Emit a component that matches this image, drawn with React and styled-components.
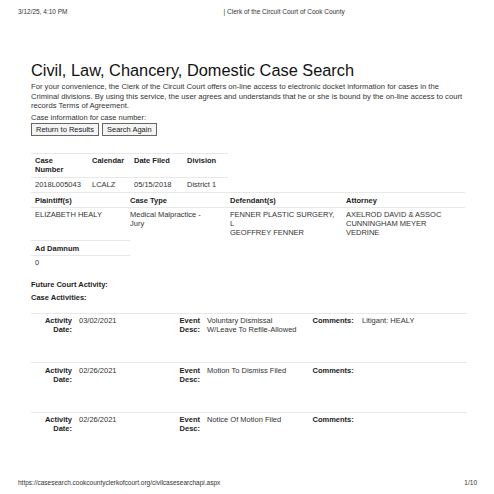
import styled, { createGlobalStyle } from "styled-components";

const GlobalStyle = createGlobalStyle`
  html, body {
    margin: 0;
    padding: 0;
    background: #fff;
  }
  body {
    font-family: "Liberation Sans", Arial, Helvetica, sans-serif;
    color: #333;
  }
`;

const Page = styled.div`
  width: 494px;
  height: 494px;
  display: flex;
  flex-direction: column;
  box-sizing: border-box;
  overflow: hidden;
`;

const PrintBar = styled.div`
  display: flex;
  align-items: center;
  justify-content: space-between;
  padding: ${(p) => (p.$bottom ? "0 17px 7px 18px" : "8px 18px 0")};
  font-size: 6.5px;
  color: #333;
  line-height: 8px;
`;

const PrintTitle = styled.span`
  flex: 1;
  padding-left: 156px;
`;

const Main = styled.main`
  flex: 1;
  padding: 0 27px 0 31px;
`;

const Title = styled.h1`
  margin: 45px 0 0;
  font-size: 16.35px;
  font-weight: normal;
  line-height: 18px;
  color: #111;
`;

const Text = styled.p`
  margin: ${(p) => p.$margin || "3px 0 0"};
  font-size: ${(p) => p.$size || 7.5}px;
  line-height: 9.7px;
  color: #333;
`;

const Buttons = styled.div`
  display: flex;
  gap: 3px;
  margin-top: 0;
`;

const Button = styled.button`
  font-family: inherit;
  font-size: 7.5px;
  line-height: 9px;
  color: #222;
  background: #f4f4f4;
  border: 1px solid #666;
  border-radius: 0;
  padding: 1px 4px;
  margin: 0;
`;

const Table = styled.table`
  border-collapse: collapse;
  table-layout: fixed;
  width: ${(p) => p.$width}px;
  margin-top: ${(p) => p.$top || 0}px;
  font-size: 7.5px;
  line-height: 9px;
`;

const Th = styled.th`
  text-align: left;
  font-weight: bold;
  color: #222;
  padding: 2.5px 4px;
  border-top: 1px solid #e8e8e8;
  border-bottom: 1px solid #e8e8e8;
  vertical-align: top;
`;

const Td = styled.td`
  padding: 3px 4px;
  vertical-align: top;
  color: #333;
  line-height: 8.6px;
`;

const SectionLabel = styled.div`
  font-size: 7.5px;
  line-height: 9px;
  font-weight: bold;
  color: #222;
  margin-top: ${(p) => p.$top}px;
`;

const Activities = styled.div`
  margin-top: 11px;
`;

const ActivityRow = styled.div`
  display: grid;
  grid-template-columns: 44.5px 100px 28px 109px 46px 1fr;
  height: 49.5px;
  box-sizing: border-box;
  border-top: 1px solid #e8e8e8;
  padding-top: 3.5px;
  font-size: 7.5px;
  line-height: 8.8px;
`;

const Label = styled.div`
  text-align: ${(p) => (p.$left ? "left" : "right")};
  font-weight: bold;
  color: #222;
  padding: 0 3.5px 0 0;
  white-space: nowrap;
`;

const Value = styled.div`
  color: #333;
  padding: 0 3.5px;
`;

const activities = [
  {
    date: "03/02/2021",
    desc: ["Voluntary Dismissal", "W/Leave To Refile-Allowed"],
    comments: "Litigant: HEALY",
  },
  { date: "02/26/2021", desc: ["Motion To Dismiss Filed"], comments: "" },
  { date: "02/26/2021", desc: ["Notice Of Motion Filed"], comments: "" },
];

export default function App() {
  return (
    <>
      <GlobalStyle />
      <Page>
        <PrintBar>
          <span>3/12/25, 4:10 PM</span>
          <PrintTitle>| Clerk of the Circuit Court of Cook County</PrintTitle>
        </PrintBar>

        <Main>
          <Title>Civil, Law, Chancery, Domestic Case Search</Title>
          <Text $size={7.65}>
            For your convenience, the Clerk of the Circuit Court offers on-line
            access to electronic docket information for cases in the Criminal
            divisions. By using this service, the user agrees and understands
            that he or she is bound by the on-line access to court records Terms
            of Agreement.
          </Text>
          <Text $margin="2px 0 0">Case information for case number:</Text>
          <Buttons>
            <Button>Return to Results</Button>
            <Button>Search Again</Button>
          </Buttons>

          <Table $width={197} $top={17}>
            <colgroup>
              <col style={{ width: 57 }} />
              <col style={{ width: 42 }} />
              <col style={{ width: 53 }} />
              <col style={{ width: 45 }} />
            </colgroup>
            <thead>
              <tr>
                <Th>
                  Case
                  <br />
                  Number
                </Th>
                <Th>Calendar</Th>
                <Th>Date Filed</Th>
                <Th>Division</Th>
              </tr>
            </thead>
            <tbody>
              <tr>
                <Td>2018L005043</Td>
                <Td>LCALZ</Td>
                <Td>05/15/2018</Td>
                <Td>District 1</Td>
              </tr>
            </tbody>
          </Table>

          <Table $width={434}>
            <colgroup>
              <col style={{ width: 95 }} />
              <col style={{ width: 100 }} />
              <col style={{ width: 116 }} />
              <col style={{ width: 123 }} />
            </colgroup>
            <thead>
              <tr>
                <Th>Plaintiff(s)</Th>
                <Th>Case Type</Th>
                <Th>Defendant(s)</Th>
                <Th>Attorney</Th>
              </tr>
            </thead>
            <tbody>
              <tr>
                <Td>ELIZABETH HEALY</Td>
                <Td>
                  Medical Malpractice -
                  <br />
                  Jury
                </Td>
                <Td>
                  FENNER PLASTIC SURGERY,
                  <br />L<br />
                  GEOFFREY FENNER
                </Td>
                <Td>
                  AXELROD DAVID &amp; ASSOC
                  <br />
                  CUNNINGHAM MEYER
                  <br />
                  VEDRINE
                </Td>
              </tr>
            </tbody>
          </Table>

          <Table $width={99}>
            <thead>
              <tr>
                <Th>Ad Damnum</Th>
              </tr>
            </thead>
            <tbody>
              <tr>
                <Td>0</Td>
              </tr>
            </tbody>
          </Table>

          <SectionLabel $top={9}>Future Court Activity:</SectionLabel>
          <SectionLabel $top={4}>Case Activities:</SectionLabel>

          <Activities>
            {activities.map((a, i) => (
              <ActivityRow key={i}>
                <Label>
                  Activity
                  <br />
                  Date:
                </Label>
                <Value>{a.date}</Value>
                <Label>
                  Event
                  <br />
                  Desc:
                </Label>
                <Value>
                  {a.desc.map((d, j) => (
                    <div key={j}>{d}</div>
                  ))}
                </Value>
                <Label $left>Comments:</Label>
                <Value>{a.comments}</Value>
              </ActivityRow>
            ))}
          </Activities>
        </Main>

        <PrintBar $bottom>
          <span>https://casesearch.cookcountyclerkofcourt.org/civilcasesearchapi.aspx</span>
          <span>1/10</span>
        </PrintBar>
      </Page>
    </>
  );
}
